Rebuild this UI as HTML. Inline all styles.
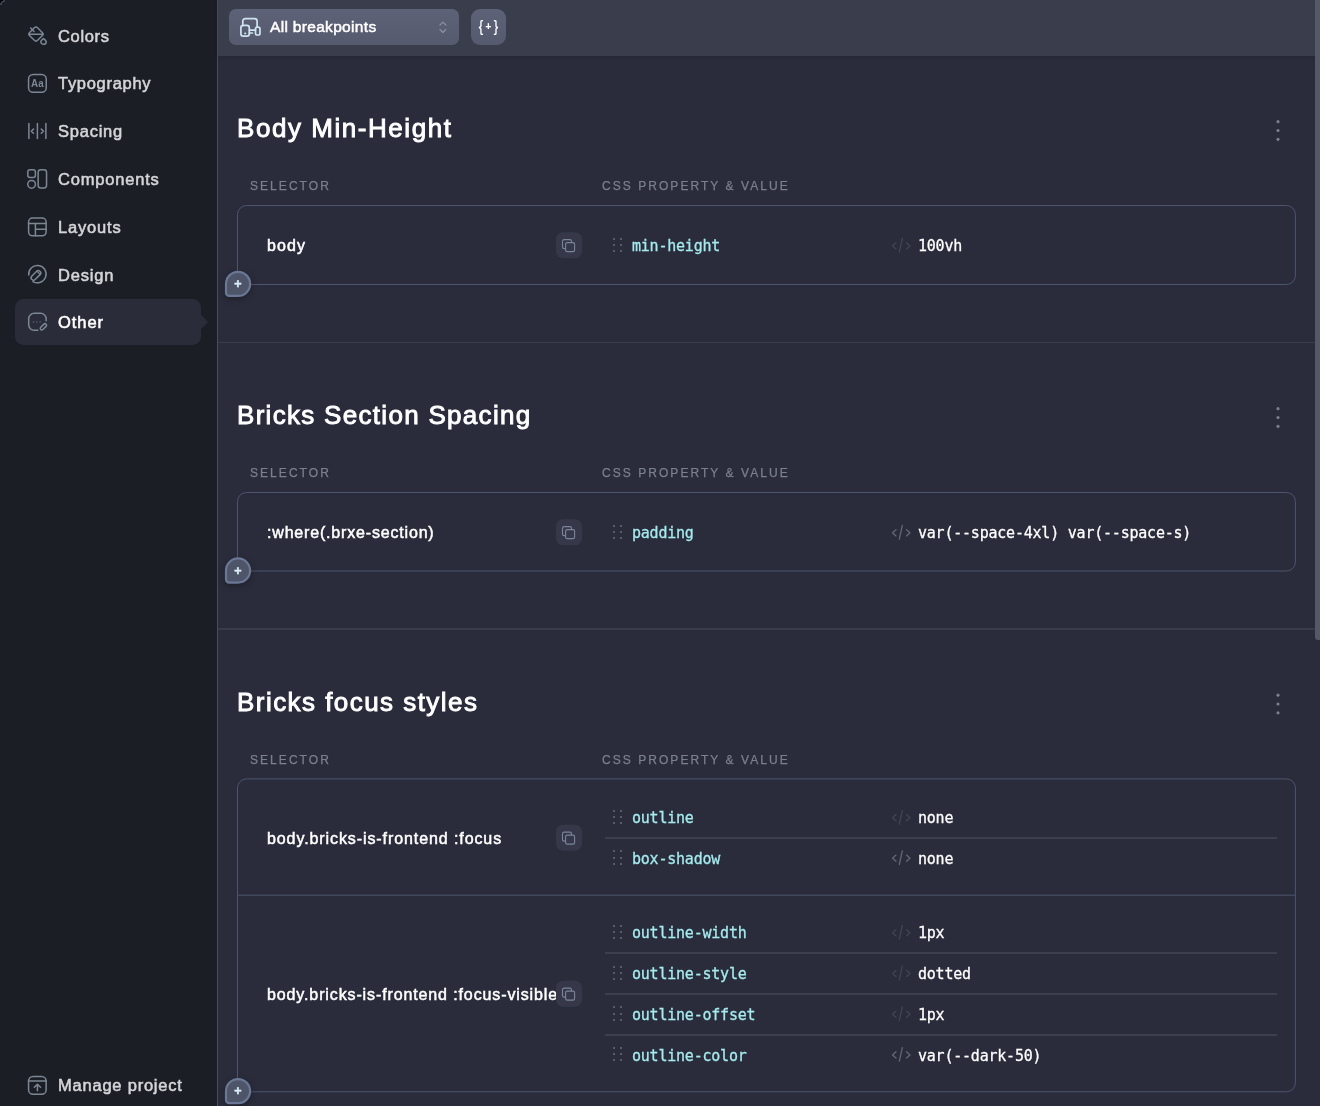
<!DOCTYPE html>
<html lang="en">
<head>
<meta charset="utf-8">
<title>Other</title>
<style>
*{box-sizing:border-box;margin:0;padding:0}
html,body{width:1320px;height:1106px;overflow:hidden;background:#2a2c3b;}
body{font-family:"Liberation Sans",sans-serif;color:#fff;position:relative}
#side{position:absolute;left:0;top:0;width:217px;height:1106px;background:#1c1e26}
#sideb{position:absolute;left:217px;top:0;width:1px;height:1106px;background:#474d63}
#main{position:absolute;left:218px;top:0;width:1102px;height:1106px;background:#2a2c3b}
#top{position:absolute;left:218px;top:0;width:1102px;height:56px;background:#3a3d4c;box-shadow:0 1px 4px rgba(0,0,0,.14)}
#scroll{position:absolute;left:1315px;top:-6px;width:5px;height:646px;border-radius:3px 0 0 3px;background:#555866}
#layer{position:absolute;left:0;top:0;width:1320px;height:1106px;will-change:transform}
#corner{position:absolute;left:0;top:0;width:5px;height:5px;background:radial-gradient(circle at 5px 5px,rgba(0,0,0,0) 3.2px,#3f4858 3.7px,#3f4858 4.6px,#000 5.2px)}
.nav{position:absolute;left:58px;font-weight:400;font-size:16.5px;-webkit-text-stroke:.55px currentColor;color:#d4d5d8;line-height:20px;white-space:nowrap}
.ico{position:absolute;width:24px;height:24px;fill:none;stroke:#7c8794;stroke-width:1.5;stroke-linecap:round;stroke-linejoin:round;overflow:visible}
#active{position:absolute;left:15px;top:299px;width:186px;height:46px;border-radius:8.5px;background:#2a2c39}
#arrow{position:absolute;left:201px;top:314.6px;width:0;height:0;border-top:7.2px solid transparent;border-bottom:7.2px solid transparent;border-left:7.4px solid #2a2c39}
#bp{position:absolute;left:229px;top:9px;width:230px;height:36px;border-radius:7px;background:linear-gradient(#5e6278,#565a6e)}
#bptxt{position:absolute;left:270px;top:17.3px;font-weight:400;font-size:15.5px;letter-spacing:.32px;-webkit-text-stroke:.5px #fff;line-height:20px;color:#fff;white-space:nowrap}
#vb{position:absolute;left:471px;top:9px;width:35px;height:36px;border-radius:9px;background:linear-gradient(#5e6278,#565a6e)}
#vbt{position:absolute;left:471px;top:9px;width:35px;height:36px;color:#fff}
#vbt span{position:absolute;text-align:center;line-height:20px;white-space:nowrap}
.h{position:absolute;left:237px;font-size:26px;line-height:32px;font-weight:400;letter-spacing:1.05px;color:#fff;white-space:nowrap;-webkit-text-stroke:.9px #fff}
.lab{position:absolute;font-size:12px;line-height:14px;letter-spacing:2.05px;color:#7b7f8e;white-space:nowrap;-webkit-text-stroke:.25px #7b7f8e}
.cardsvg{position:absolute;width:1062px;fill:none;stroke:#4d546d;stroke-width:1;overflow:visible}
.sel{position:absolute;left:267px;font-size:16px;line-height:20px;font-weight:400;-webkit-text-stroke:.5px #fff;color:#fff;white-space:nowrap}
.mono{font-family:"DejaVu Sans Mono","Liberation Mono",monospace;font-size:15px;letter-spacing:-.22px;-webkit-text-stroke:.28px currentColor;line-height:20px;position:absolute;white-space:nowrap}
.prop{left:632px;color:#a5ebee}
.val{left:918px;color:#fff}
.hr{position:absolute;left:605px;width:672px;height:2px;background:#3b3f50}
.sepsvg{position:absolute;width:1097px;fill:none;stroke:#383c4b;stroke-width:1}
.sep{position:absolute;left:218px;width:1097px;height:1px;background:#383c4b}
.copy{position:absolute;width:27px;height:27px;fill:none;stroke:#7b8599;stroke-width:1.1;overflow:visible}
.plus{position:absolute;width:28px;height:28px;fill:#4f5569;stroke:#6a7795;stroke-width:2.2;overflow:visible;filter:drop-shadow(0 2px 3px rgba(0,0,0,.28))}
.dots{position:absolute;left:613px;width:9px;height:15px}
.dots i{position:absolute;width:2px;height:2px;background:#565b6d}
.code{position:absolute;width:22px;height:18px;fill:none;stroke:#404456;stroke-width:1.3;stroke-linecap:round;stroke-linejoin:round;overflow:visible}
.code.b{stroke:#62677a}
.kebab{position:absolute;width:8px;height:24px;fill:#7a8090;overflow:visible}
</style>
</head>
<body>
<div id="layer">
<div id="side"></div><div id="sideb"></div><div id="main"></div><div id="top"></div>
<div id="active"></div><div id="arrow"></div>
<!--NAV-->
<svg class="ico" style="left:25px;top:23px" viewBox="0 0 24 24"><g transform="translate(0.40 0.50)"><rect x="-5.55" y="-5.55" width="11.1" height="11.1" rx="2.3" transform="translate(10.55 10.55) rotate(45)"/><path d="M3.4 10.75H17.7M5.3 4.5L8.6 7.9"/><path d="M18.1 15c1.4 1.2 2.7 2.05 2.7 3.15a2.7 2.7 0 0 1-5.4 0c0-1.1 1.3-1.95 2.7-3.15z"/></g></svg>
<div class="nav" style="top:25.5px;letter-spacing:0.66px">Colors</div>
<svg class="ico" style="left:25px;top:71px" viewBox="0 0 24 24"><g transform="translate(0.40 0.40)"><rect x="3.15" y="3.15" width="17.7" height="17.7" rx="4.6"/><text x="5.7" y="15.5" textLength="12.6" lengthAdjust="spacingAndGlyphs" font-family="Liberation Sans,sans-serif" font-weight="700" font-size="10.6" stroke="none" fill="#7c8794">Aa</text></g></svg>
<div class="nav" style="top:73.0px;letter-spacing:0.71px">Typography</div>
<svg class="ico" style="left:25px;top:119px" viewBox="0 0 24 24"><g transform="translate(0.40 0.00)"><path d="M3.5 4.6V19.6M12 4.6V19.6M20.5 4.6V19.6M8.1 10.1L5.9 12.2L8.1 14.3M15.9 10.1L18.1 12.2L15.9 14.3"/></g></svg>
<div class="nav" style="top:120.5px;letter-spacing:0.77px">Spacing</div>
<svg class="ico" style="left:25px;top:167px" viewBox="0 0 24 24"><g transform="translate(0.40 0.00)"><rect x="2.4" y="2.75" width="7.6" height="7.8" rx="2.2"/><circle cx="6.2" cy="17.3" r="3.85"/><rect x="12.75" y="2.75" width="8.4" height="18.2" rx="2.6"/></g></svg>
<div class="nav" style="top:168.5px;letter-spacing:0.81px">Components</div>
<svg class="ico" style="left:25px;top:214px" viewBox="0 0 24 24"><g transform="translate(0.40 0.90)"><rect x="3.2" y="3.2" width="17.5" height="17.7" rx="3.8"/><path d="M3.2 8.65H20.7M10 8.65V20.9M10 14.3H20.7"/></g></svg>
<div class="nav" style="top:216.5px;letter-spacing:0.81px">Layouts</div>
<svg class="ico" style="left:25px;top:262px" viewBox="0 0 24 24"><g transform="translate(0.40 0.10)"><path d="M3.35 13A8.7 8.7 0 1 1 7.5 19.45"/><rect x="-2.4" y="-5.7" width="4.8" height="11.4" rx="2.2" transform="translate(10.5 13.3) rotate(45)"/><path d="M11.4 9L14.8 12.4" stroke-width="1.1"/></g></svg>
<div class="nav" style="top:264.5px;letter-spacing:0.8px">Design</div>
<svg class="ico" style="left:25px;top:309px" viewBox="0 0 24 24"><g transform="translate(0.40 0.80)"><path d="M20.75 11V9a5.5 5.5 0 0 0-5.5-5.5H8.8a5.5 5.5 0 0 0-5.5 5.5v6a5.5 5.5 0 0 0 5.5 5.5H12.5"/><rect x="-1.55" y="-3.75" width="3.1" height="7.5" rx="1.55" transform="translate(18 17) rotate(46)"/><g fill="#6a7484" stroke="none"><rect x="7.5" y="11.6" width="1.1" height="1.2"/><rect x="10.8" y="11.6" width="1.1" height="1.2"/><rect x="14.1" y="11.6" width="1.1" height="1.2"/></g></g></svg>
<div class="nav" style="top:311.5px;color:#fff;letter-spacing:0.93px">Other</div>
<svg class="ico" style="left:25px;top:1073px" viewBox="0 0 24 24"><g transform="translate(0.40 0.40)"><rect x="3.15" y="3.1" width="17.6" height="17.8" rx="4.6"/><path d="M3.15 7.6H20.75M12 17.4V10.9M8.9 13.8L12 10.8L15.1 13.8"/></g></svg>
<div class="nav" style="top:1074.5px;letter-spacing:0.78px">Manage project</div>
<!--/NAV-->
<!--TOPBAR-->
<div id="bp"></div>
<svg style="position:absolute;left:238px;top:15px;width:24px;height:24px;fill:none;stroke:#cfe4ee;stroke-width:1.7;stroke-linecap:round;stroke-linejoin:round;overflow:visible" viewBox="0 0 24 24"><path d="M4.8 10.4V6.1a2.5 2.5 0 0 1 2.5-2.5H16.6a2.5 2.5 0 0 1 2.5 2.5V12.2"/><rect x="2.9" y="10.4" width="8.4" height="10.7" rx="2.4"/><rect x="17.5" y="12.2" width="4.5" height="7.8" rx="1.8"/><path d="M11.3 15.1H17.5M11.3 18H14.4M7 18.4H7.4"/></svg>
<div id="bptxt">All breakpoints</div>
<svg style="position:absolute;left:437px;top:17px;width:12px;height:20px;fill:none;stroke:#898fa1;stroke-width:1.3;stroke-linecap:round;stroke-linejoin:round" viewBox="0 0 12 20"><path d="M3 8L5.9 5.1L8.8 8M3 12.5L5.9 15.5L8.8 12.5"/></svg>
<div id="vb"></div><div id="vbt"><span style="left:6.3px;top:7.8px;width:8px;font-size:17px;-webkit-text-stroke:.2px #fff;transform:scaleX(.78)">{</span><span style="left:12.5px;top:8px;width:10px;font-size:10px;font-weight:700;-webkit-text-stroke:.15px #fff">+</span><span style="left:20.8px;top:7.8px;width:8px;font-size:17px;-webkit-text-stroke:.2px #fff;transform:scaleX(.78)">}</span></div>
<!--/TOPBAR-->
<!--SECTIONS-->
<div class="h" style="top:112.0px;letter-spacing:1.55px">Body Min-Height</div>
<svg class="kebab" style="left:1274px;top:118px" viewBox="0 0 8 24"><g transform="translate(0.00 0.50)"><circle cx="4" cy="3.13" r="1.55"/><circle cx="4" cy="12" r="1.55"/><circle cx="4" cy="20.87" r="1.55"/></g></svg>
<div class="lab" style="left:250px;top:178.5px">SELECTOR</div>
<div class="lab" style="left:602px;top:178.5px">CSS PROPERTY &amp; VALUE</div>
<svg class="cardsvg" style="left:236px;top:203px;height:85px"><g transform="translate(0.00 0.50)"><rect x="1.5" y="2" width="1057.9" height="79.00" rx="9"/></g></svg>
<div class="sel" style="top:236.3px;letter-spacing:1.1px">body</div><svg class="copy" style="left:556px;top:232px" viewBox="0 0 27 27"><g transform="translate(0.00 0.30)"><rect x="0" y="0" width="26" height="26" rx="7" fill="#36384a" stroke="none"/><rect x="6.5" y="7.3" width="9" height="9" rx="1.7"/><rect x="9.6" y="10.3" width="9" height="9" rx="1.7" fill="#36384a"/></g></svg>
<div class="dots" style="top:238.0px"><i style="left:0px;top:0px"></i><i style="left:6.6px;top:0px"></i><i style="left:0px;top:6.2px"></i><i style="left:6.6px;top:6.2px"></i><i style="left:0px;top:12.4px"></i><i style="left:6.6px;top:12.4px"></i></div>
<div class="mono prop" style="top:236.0px">min-height</div>
<svg class="code" style="left:890px;top:236px" viewBox="0 0 22 18"><g transform="translate(0.00 0.50)"><path d="M6 6.2L2.5 9.3L6 12.4M9.3 15.6L12.3 2M16.5 6.2L20 9.3L16.5 12.4"/></g></svg>
<div class="mono val" style="top:236.0px">100vh</div>
<svg class="plus" style="left:224px;top:270px" viewBox="0 0 28 28"><g transform="translate(0.90 0.75)"><path d="M13.15 1.1A12.05 12.05 0 0 1 13.15 25.2H4.3A3.2 3.2 0 0 1 1.1 22V13.15A12.05 12.05 0 0 1 13.15 1.1Z"/><text x="13.1" y="17.4" text-anchor="middle" font-family="Liberation Sans,sans-serif" font-weight="700" font-size="12.5" fill="#d8eef6" stroke="#d8eef6" stroke-width=".5">+</text></g></svg>
<div class="sep" style="top:342px"></div>
<div class="h" style="top:399.0px;letter-spacing:1.3px">Bricks Section Spacing</div>
<svg class="kebab" style="left:1274px;top:405px" viewBox="0 0 8 24"><g transform="translate(0.00 0.50)"><circle cx="4" cy="3.13" r="1.55"/><circle cx="4" cy="12" r="1.55"/><circle cx="4" cy="20.87" r="1.55"/></g></svg>
<div class="lab" style="left:250px;top:465.5px">SELECTOR</div>
<div class="lab" style="left:602px;top:465.5px">CSS PROPERTY &amp; VALUE</div>
<svg class="cardsvg" style="left:236px;top:490px;height:85px"><g transform="translate(0.00 0.50)"><rect x="1.5" y="2" width="1057.9" height="78.50" rx="9"/></g></svg>
<div class="sel" style="top:523.3px;letter-spacing:.82px">:where(.brxe-section)</div><svg class="copy" style="left:556px;top:519px" viewBox="0 0 27 27"><g transform="translate(0.00 0.30)"><rect x="0" y="0" width="26" height="26" rx="7" fill="#36384a" stroke="none"/><rect x="6.5" y="7.3" width="9" height="9" rx="1.7"/><rect x="9.6" y="10.3" width="9" height="9" rx="1.7" fill="#36384a"/></g></svg>
<div class="dots" style="top:525.0px"><i style="left:0px;top:0px"></i><i style="left:6.6px;top:0px"></i><i style="left:0px;top:6.2px"></i><i style="left:6.6px;top:6.2px"></i><i style="left:0px;top:12.4px"></i><i style="left:6.6px;top:12.4px"></i></div>
<div class="mono prop" style="top:523.0px">padding</div>
<svg class="code b" style="left:890px;top:523px" viewBox="0 0 22 18"><g transform="translate(0.00 0.50)"><path d="M6 6.2L2.5 9.3L6 12.4M9.3 15.6L12.3 2M16.5 6.2L20 9.3L16.5 12.4"/></g></svg>
<div class="mono val" style="top:523.0px">var(--space-4xl) var(--space-s)</div>
<svg class="plus" style="left:224px;top:557px" viewBox="0 0 28 28"><g transform="translate(0.90 0.35)"><path d="M13.15 1.1A12.05 12.05 0 0 1 13.15 25.2H4.3A3.2 3.2 0 0 1 1.1 22V13.15A12.05 12.05 0 0 1 13.15 1.1Z"/><text x="13.1" y="17.4" text-anchor="middle" font-family="Liberation Sans,sans-serif" font-weight="700" font-size="12.5" fill="#d8eef6" stroke="#d8eef6" stroke-width=".5">+</text></g></svg>
<svg class="sepsvg" style="left:218px;top:626px;height:6px"><g transform="translate(0.00 0.45)"><path d="M0 2.5H1097" stroke-width="1.6" stroke="#3c4050"/></g></svg>
<div class="h" style="top:685.5px;letter-spacing:1.45px">Bricks focus styles</div>
<svg class="kebab" style="left:1274px;top:692px" viewBox="0 0 8 24"><g transform="translate(0.00 0.00)"><circle cx="4" cy="3.13" r="1.55"/><circle cx="4" cy="12" r="1.55"/><circle cx="4" cy="20.87" r="1.55"/></g></svg>
<div class="lab" style="left:250px;top:752.5px">SELECTOR</div>
<div class="lab" style="left:602px;top:752.5px">CSS PROPERTY &amp; VALUE</div>
<svg class="cardsvg" style="left:236px;top:776px;height:319px"><g transform="translate(0.00 0.90)"><rect x="1.5" y="2" width="1057.9" height="312.90" rx="9"/></g></svg>
<svg class="cardsvg" style="left:236px;top:893px;height:5px"><g transform="translate(0.00 0.00)"><path d="M1.5 2.2H1059.4"/></g></svg>
<div class="sel" style="top:828.8px;letter-spacing:.91px">body.bricks-is-frontend :focus</div><svg class="copy" style="left:556px;top:824px" viewBox="0 0 27 27"><g transform="translate(0.00 0.80)"><rect x="0" y="0" width="26" height="26" rx="7" fill="#36384a" stroke="none"/><rect x="6.5" y="7.3" width="9" height="9" rx="1.7"/><rect x="9.6" y="10.3" width="9" height="9" rx="1.7" fill="#36384a"/></g></svg>
<div class="dots" style="top:809.9px"><i style="left:0px;top:0px"></i><i style="left:6.6px;top:0px"></i><i style="left:0px;top:6.2px"></i><i style="left:6.6px;top:6.2px"></i><i style="left:0px;top:12.4px"></i><i style="left:6.6px;top:12.4px"></i></div>
<div class="mono prop" style="top:808.0px">outline</div>
<svg class="code" style="left:890px;top:808px" viewBox="0 0 22 18"><g transform="translate(0.00 0.40)"><path d="M6 6.2L2.5 9.3L6 12.4M9.3 15.6L12.3 2M16.5 6.2L20 9.3L16.5 12.4"/></g></svg>
<div class="mono val" style="top:808.0px">none</div>
<div class="hr" style="top:837px"></div>
<div class="dots" style="top:850.4px"><i style="left:0px;top:0px"></i><i style="left:6.6px;top:0px"></i><i style="left:0px;top:6.2px"></i><i style="left:6.6px;top:6.2px"></i><i style="left:0px;top:12.4px"></i><i style="left:6.6px;top:12.4px"></i></div>
<div class="mono prop" style="top:849.0px">box-shadow</div>
<svg class="code b" style="left:890px;top:848px" viewBox="0 0 22 18"><g transform="translate(0.00 0.90)"><path d="M6 6.2L2.5 9.3L6 12.4M9.3 15.6L12.3 2M16.5 6.2L20 9.3L16.5 12.4"/></g></svg>
<div class="mono val" style="top:849.0px">none</div>
<div class="sel" style="top:984.8px;letter-spacing:.88px">body.bricks-is-frontend :focus-visible</div><svg class="copy" style="left:556px;top:980px" viewBox="0 0 27 27"><g transform="translate(0.00 0.80)"><rect x="0" y="0" width="26" height="26" rx="7" fill="#36384a" stroke="none"/><rect x="6.5" y="7.3" width="9" height="9" rx="1.7"/><rect x="9.6" y="10.3" width="9" height="9" rx="1.7" fill="#36384a"/></g></svg>
<div class="dots" style="top:925.0px"><i style="left:0px;top:0px"></i><i style="left:6.6px;top:0px"></i><i style="left:0px;top:6.2px"></i><i style="left:6.6px;top:6.2px"></i><i style="left:0px;top:12.4px"></i><i style="left:6.6px;top:12.4px"></i></div>
<div class="mono prop" style="top:923.0px">outline-width</div>
<svg class="code" style="left:890px;top:923px" viewBox="0 0 22 18"><g transform="translate(0.00 0.50)"><path d="M6 6.2L2.5 9.3L6 12.4M9.3 15.6L12.3 2M16.5 6.2L20 9.3L16.5 12.4"/></g></svg>
<div class="mono val" style="top:923.0px">1px</div>
<div class="hr" style="top:952px"></div>
<div class="dots" style="top:965.7px"><i style="left:0px;top:0px"></i><i style="left:6.6px;top:0px"></i><i style="left:0px;top:6.2px"></i><i style="left:6.6px;top:6.2px"></i><i style="left:0px;top:12.4px"></i><i style="left:6.6px;top:12.4px"></i></div>
<div class="mono prop" style="top:964.0px">outline-style</div>
<svg class="code" style="left:890px;top:964px" viewBox="0 0 22 18"><g transform="translate(0.00 0.20)"><path d="M6 6.2L2.5 9.3L6 12.4M9.3 15.6L12.3 2M16.5 6.2L20 9.3L16.5 12.4"/></g></svg>
<div class="mono val" style="top:964.0px">dotted</div>
<div class="hr" style="top:993px"></div>
<div class="dots" style="top:1006.4px"><i style="left:0px;top:0px"></i><i style="left:6.6px;top:0px"></i><i style="left:0px;top:6.2px"></i><i style="left:6.6px;top:6.2px"></i><i style="left:0px;top:12.4px"></i><i style="left:6.6px;top:12.4px"></i></div>
<div class="mono prop" style="top:1005.0px">outline-offset</div>
<svg class="code" style="left:890px;top:1004px" viewBox="0 0 22 18"><g transform="translate(0.00 0.90)"><path d="M6 6.2L2.5 9.3L6 12.4M9.3 15.6L12.3 2M16.5 6.2L20 9.3L16.5 12.4"/></g></svg>
<div class="mono val" style="top:1005.0px">1px</div>
<div class="hr" style="top:1034px"></div>
<div class="dots" style="top:1047.1px"><i style="left:0px;top:0px"></i><i style="left:6.6px;top:0px"></i><i style="left:0px;top:6.2px"></i><i style="left:6.6px;top:6.2px"></i><i style="left:0px;top:12.4px"></i><i style="left:6.6px;top:12.4px"></i></div>
<div class="mono prop" style="top:1046.0px">outline-color</div>
<svg class="code b" style="left:890px;top:1045px" viewBox="0 0 22 18"><g transform="translate(0.00 0.60)"><path d="M6 6.2L2.5 9.3L6 12.4M9.3 15.6L12.3 2M16.5 6.2L20 9.3L16.5 12.4"/></g></svg>
<div class="mono val" style="top:1046.0px">var(--dark-50)</div>
<svg class="plus" style="left:224px;top:1077px" viewBox="0 0 28 28"><g transform="translate(0.90 0.95)"><path d="M13.15 1.1A12.05 12.05 0 0 1 13.15 25.2H4.3A3.2 3.2 0 0 1 1.1 22V13.15A12.05 12.05 0 0 1 13.15 1.1Z"/><text x="13.1" y="17.4" text-anchor="middle" font-family="Liberation Sans,sans-serif" font-weight="700" font-size="12.5" fill="#d8eef6" stroke="#d8eef6" stroke-width=".5">+</text></g></svg>
<!--/SECTIONS-->
<div id="scroll"></div>
<div id="corner"></div>
</div>
</body>
</html>
